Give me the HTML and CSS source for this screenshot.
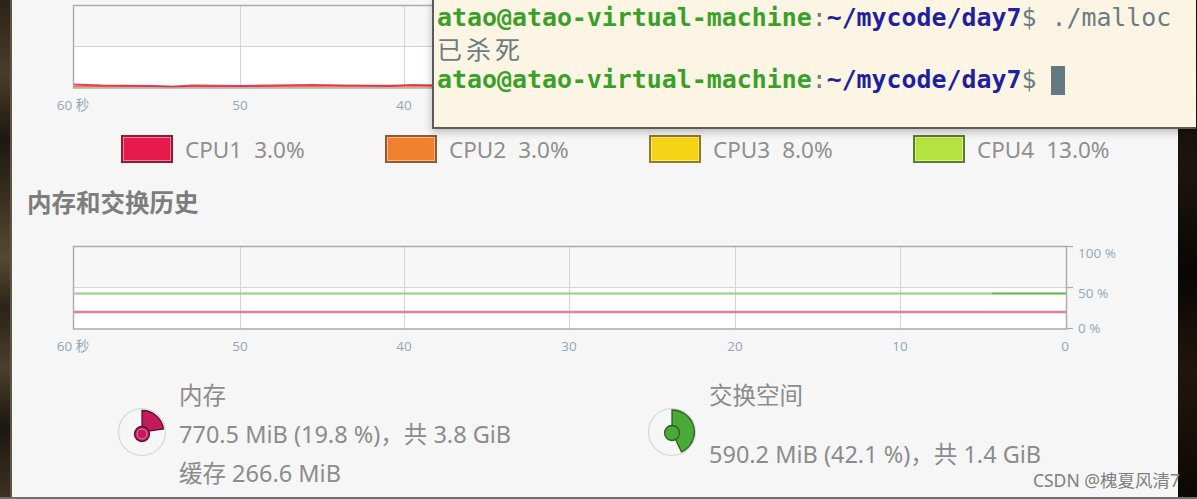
FILE: index.html
```html
<!DOCTYPE html>
<html lang="zh-CN">
<head>
<meta charset="utf-8">
<title>系统监视器</title>
<link rel="stylesheet" href="styles.css">
</head>
<body>
<div class="screen">
  <div class="edge edge-left"></div>
  <main class="panel">
    <svg class="chart cpu-chart" width="1166" height="120" viewBox="0 0 1166 120">
      <rect class="plot-top" x="61" y="5" width="993" height="41.5"/>
      <rect class="plot-bottom" x="61" y="46.5" width="993" height="41.5"/>
      <g class="grid">
        <line x1="228.5" y1="5" x2="228.5" y2="88"/>
        <line x1="392.5" y1="5" x2="392.5" y2="88"/>
        <line x1="557.5" y1="5" x2="557.5" y2="88"/>
        <line x1="723.5" y1="5" x2="723.5" y2="88"/>
        <line x1="888.5" y1="5" x2="888.5" y2="88"/>
        <line x1="61" y1="46.5" x2="1054" y2="46.5"/>
      </g>
      <polyline class="cpu3" points="61,87 1054,87"/>
      <polyline class="cpu2" points="61,86.5 120,86 200,86.5 300,86 380,85.5 420,86 1054,86.5"/>
      <polyline class="cpu1" points="61,84.5 90,85.5 140,86 160,87 180,85.5 230,86 260,85.5 300,85 330,85.5 380,86 400,85 430,85.5 1054,85.5"/>
      <path class="frame" d="M61.5 88 V5.5 H1054.5 V88 Z"/>
      <g class="xlabels">
        <text x="61" y="110">60 秒</text>
        <text x="228" y="110">50</text>
        <text x="392" y="110">40</text>
        <text x="557" y="110">30</text>
        <text x="723" y="110">20</text>
        <text x="888" y="110">10</text>
        <text x="1053" y="110">0</text>
      </g>
    </svg>

    <div class="legend">
      <div class="legend-item"><span class="swatch s1"></span><span class="lname">CPU1</span><span class="lval">3.0%</span></div>
      <div class="legend-item"><span class="swatch s2"></span><span class="lname">CPU2</span><span class="lval">3.0%</span></div>
      <div class="legend-item"><span class="swatch s3"></span><span class="lname">CPU3</span><span class="lval">8.0%</span></div>
      <div class="legend-item"><span class="swatch s4"></span><span class="lname">CPU4</span><span class="lval">13.0%</span></div>
    </div>

    <h2 class="section-title">内存和交换历史</h2>

    <svg class="chart mem-chart" width="1166" height="120" viewBox="0 0 1166 120">
      <rect class="plot-top" x="61" y="10" width="993" height="41.5"/>
      <rect class="plot-bottom" x="61" y="51.5" width="993" height="41.5"/>
      <g class="grid">
        <line x1="228.5" y1="10" x2="228.5" y2="93"/>
        <line x1="392.5" y1="10" x2="392.5" y2="93"/>
        <line x1="557.5" y1="10" x2="557.5" y2="93"/>
        <line x1="723.5" y1="10" x2="723.5" y2="93"/>
        <line x1="888.5" y1="10" x2="888.5" y2="93"/>
        <line x1="61" y1="51.5" x2="1054" y2="51.5"/>
      </g>
      <line class="swap-line" x1="61" y1="57.5" x2="1054" y2="57.5"/>
      <line class="swap-line-end" x1="980" y1="57.5" x2="1054" y2="57.5"/>
      <line class="mem-line" x1="61" y1="76" x2="1054" y2="76"/>
      <path class="frame" d="M61.5 93 V10.5 H1054.5 V93 Z"/>
      <g class="ticks">
        <line x1="1054" y1="10.5" x2="1061" y2="10.5"/>
        <line x1="1054" y1="51.5" x2="1061" y2="51.5"/>
        <line x1="1054" y1="92.5" x2="1061" y2="92.5"/>
      </g>
      <g class="ylabels">
        <text x="1066" y="22">100 %</text>
        <text x="1066" y="62">50 %</text>
        <text x="1066" y="97">0 %</text>
      </g>
      <g class="xlabels">
        <text x="61" y="115">60 秒</text>
        <text x="228" y="115">50</text>
        <text x="392" y="115">40</text>
        <text x="557" y="115">30</text>
        <text x="723" y="115">20</text>
        <text x="888" y="115">10</text>
        <text x="1053" y="115">0</text>
      </g>
    </svg>

    <div class="usage">
      <div class="usage-block mem-block">
        <svg class="pie" width="50" height="50" viewBox="0 0 50 50">
          <circle class="pie-ring" cx="25" cy="25" r="23.5"/>
          <path class="pie-mem" d="M25 25 L25 3.5 A21.5 21.5 0 0 1 46.5 22 Z"/>
          <circle class="pie-mem" cx="25" cy="27" r="7.5"/>
          <circle class="pie-mem-inner" cx="25" cy="27" r="5"/>
        </svg>
        <div class="usage-text">
          <div>内存</div>
          <div>770.5 MiB (19.8 %)，共 3.8 GiB</div>
          <div>缓存 266.6 MiB</div>
        </div>
      </div>
      <div class="usage-block swap-block">
        <svg class="pie" width="50" height="50" viewBox="0 0 50 50">
          <circle class="pie-ring" cx="25" cy="25" r="23.5"/>
          <path class="pie-swap" d="M25 25 L25 3 A22 22 0 0 1 34.5 45 Z"/>
          <circle class="pie-swap" cx="25" cy="26" r="7.5"/>
        </svg>
        <div class="usage-text">
          <div>交换空间</div>
          <div class="swap-detail">590.2 MiB (42.1 %)，共 1.4 GiB</div>
        </div>
      </div>
    </div>
  </main>
  <div class="edge edge-right"></div>

  <section class="terminal">
    <div class="tline"><span class="t-user">atao@atao-virtual-machine</span><span class="t-plain">:</span><span class="t-path">~/mycode/day7</span><span class="t-plain">$ ./malloc</span></div>
    <div class="tline"><span class="t-plain t-cjk">已杀死</span></div>
    <div class="tline"><span class="t-user">atao@atao-virtual-machine</span><span class="t-plain">:</span><span class="t-path">~/mycode/day7</span><span class="t-plain">$ </span><span class="cursor"></span></div>
  </section>

  <div class="watermark">CSDN @槐夏风清7</div>
</div>
</body>
</html>
```

FILE: styles.css
```css
* { box-sizing: border-box; }

html, body {
  margin: 0;
  padding: 0;
}

body {
  width: 1197px;
  height: 499px;
  overflow: hidden;
  background: #0b0705;
  font-family: "Noto Sans", "Noto Sans CJK SC", sans-serif;
}

.screen {
  position: relative;
  display: flex;
  height: 499px;
  border-bottom: 2px solid #6f6f6f;
}

.edge-left {
  width: 12px;
  flex: none;
  background: linear-gradient(180deg, #2c2418 0%, #4a3c2a 15%, #1d1810 28%, #3e3424 42%, #55492f 52%, #2a2319 62%, #4b3f2b 74%, #1c1711 86%, #3d3222 100%);
  border-right: 2px solid #5c5548;
}

.edge-right {
  flex: 1;
  background: linear-gradient(180deg, #0f0a07 0%, #1c140e 35%, #0a0604 55%, #21160d 75%, #0d0805 100%);
}

.panel {
  width: 1166px;
  flex: none;
  background: #f6f6f6;
  display: flex;
  flex-direction: column;
}

/* charts */
.chart { display: block; }
.plot-top { fill: #f7f7f7; }
.plot-bottom { fill: #ffffff; }
.grid line { stroke: #d3d3d3; stroke-width: 1; }
.frame { fill: none; stroke: #ababab; stroke-width: 1.4; }
.ticks line { stroke: #ababab; stroke-width: 1.2; }

.xlabels text, .ylabels text {
  font-family: "Open Sans", "Noto Sans CJK SC", sans-serif;
  font-size: 13.5px;
  fill: #93a6b5;
}
.xlabels text { text-anchor: middle; }
.ylabels text { text-anchor: start; }

.cpu1 { fill: none; stroke: #e3275a; stroke-width: 2; opacity: 0.9; }
.cpu2 { fill: none; stroke: #f2822d; stroke-width: 1.6; }
.cpu3 { fill: none; stroke: #f2cf1a; stroke-width: 1.6; }

.swap-line { stroke: #94cf85; stroke-width: 2.2; }
.swap-line-end { stroke: #5db447; stroke-width: 1.6; }
.mem-line { stroke: #d9809f; stroke-width: 2.4; }

/* legend */
.legend {
  display: flex;
  margin-top: 15px;
  padding-left: 109px;
  height: 28px;
}
.legend-item {
  width: 264px;
  display: flex;
  align-items: center;
  font-size: 22.5px;
  color: #8f8f8f;
}
.swatch {
  width: 52px;
  height: 28px;
  margin-right: 12px;
  border: 2px solid;
  box-shadow: inset 0 0 0 1px rgba(255, 255, 255, 0.45);
}
.s1 { background: #e81a4b; border-color: #8d1d36; }
.s2 { background: #f2812f; border-color: #8f5b2f; }
.s3 { background: #f5d315; border-color: #8f7b22; }
.s4 { background: #b4e23f; border-color: #5e7d2c; }
.lval { margin-left: 12px; }

.section-title {
  margin: 28px 0 0 15px;
  height: 24px;
  line-height: 24px;
  font-size: 24.5px;
  font-weight: bold;
  color: #7d7d7d;
}

.mem-chart { margin-top: 21px; }

/* usage */
.usage {
  display: flex;
  margin-top: 20px;
  padding-left: 105px;
  color: #8c8c8c;
  font-size: 23.5px;
}
.usage-block {
  display: flex;
  align-items: flex-start;
}
.mem-block { width: 530px; }
.pie {
  flex: none;
  margin-right: 12px;
  margin-top: 31px;
}
.usage-text { line-height: 39px; }
.swap-detail { margin-top: 20px; }

.pie-ring { fill: none; stroke: #d6d6d6; stroke-width: 1.2; }
.pie-mem { fill: #c21a5a; stroke: #5a1232; stroke-width: 1.3; }
.pie-mem-inner { fill: #c21a5a; stroke: #ea7aa6; stroke-width: 1; }
.pie-swap { fill: #4ba93a; stroke: #2c5e22; stroke-width: 1.3; }

/* terminal window */
.terminal {
  position: absolute;
  left: 432px;
  top: 0;
  width: 764px;
  height: 129px;
  background: #fcf5e3;
  border-left: 2px solid #5b5b5b;
  border-bottom: 2px solid #5b5b5b;
  padding: 2px 0 0 3px;
  font-family: "DejaVu Sans Mono", "Noto Sans CJK SC", monospace;
  font-size: 24.9px;
  line-height: 31px;
  box-shadow: 0 3px 8px rgba(0, 0, 0, 0.25);
}
.tline {
  height: 31px;
  white-space: pre;
}
.t-user { color: #3aa02a; font-weight: bold; }
.t-path { color: #1f1fa0; font-weight: bold; }
.t-plain { color: #6a7d84; }
.t-cjk {
  font-family: "Noto Sans CJK SC", sans-serif;
  font-size: 25px;
  letter-spacing: 4px;
}
.cursor {
  display: inline-block;
  width: 14px;
  height: 29px;
  background: #637880;
  vertical-align: -7px;
}

.watermark {
  position: absolute;
  right: 17px;
  bottom: 5px;
  font-family: "Noto Sans", "Noto Sans CJK SC", sans-serif;
  font-size: 17.5px;
  color: #808080;
}
```
